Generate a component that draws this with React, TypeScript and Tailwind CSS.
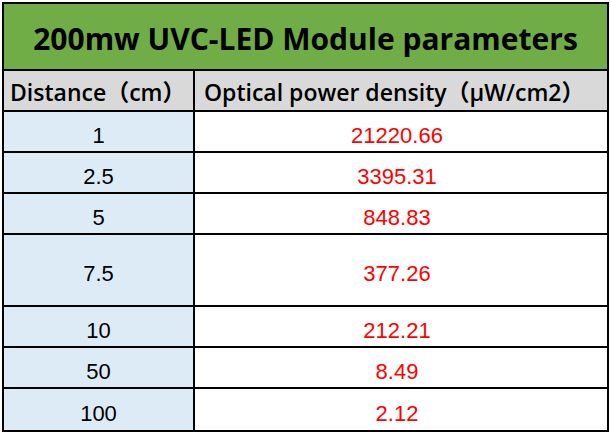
const ROWS: { distance: string; density: string; tall?: boolean }[] = [
  { distance: "1", density: "21220.66" },
  { distance: "2.5", density: "3395.31" },
  { distance: "5", density: "848.83" },
  { distance: "7.5", density: "377.26", tall: true },
  { distance: "10", density: "212.21" },
  { distance: "50", density: "8.49" },
  { distance: "100", density: "2.12" },
];

const headFont = { fontFamily: '"Open Sans", "Noto Sans CJK SC", sans-serif' };
const numFont = { fontFamily: '"Liberation Sans", Arial, sans-serif' };

export default function App() {
  return (
    <div className="w-[611px] h-[433px] bg-white pt-[2px] pl-[2px]">
      <div className="w-[607px] border-2 border-black flex flex-col">
        {/* Title */}
        <div
          className="h-[67px] bg-[#70ad47] border-b-2 border-black flex items-center justify-center pt-[3px] text-[30px] font-bold text-black"
          style={headFont}
        >
          200mw UVC-LED Module parameters
        </div>

        {/* Column headers */}
        <div className="h-[41px] flex bg-[#d9d9d9] border-b-2 border-black text-[23px] font-semibold text-black" style={headFont}>
          <div className="w-[191px] border-r-2 border-black flex items-center pl-[6px] pt-[3px] whitespace-nowrap">
            Distance（cm）
          </div>
          <div className="flex-1 flex items-center pl-[9px] pt-[3px] whitespace-nowrap">
            Optical power density（μW/cm2）
          </div>
        </div>

        {/* Data rows */}
        {ROWS.map((r, i) => (
          <div
            key={r.distance}
            className={`flex text-[22px] ${r.tall ? "h-[72px]" : "h-[41px]"} ${i < ROWS.length - 1 ? "border-b-2 border-black" : ""}`}
            style={numFont}
          >
            <div className="w-[191px] bg-[#ddebf7] border-r-2 border-black flex items-center justify-center pt-[7px] text-black">
              {r.distance}
            </div>
            <div className="flex-1 flex items-center justify-center pt-[7px] pr-[8px] text-[#ff0000]">
              {r.density}
            </div>
          </div>
        ))}
      </div>
    </div>
  );
}
